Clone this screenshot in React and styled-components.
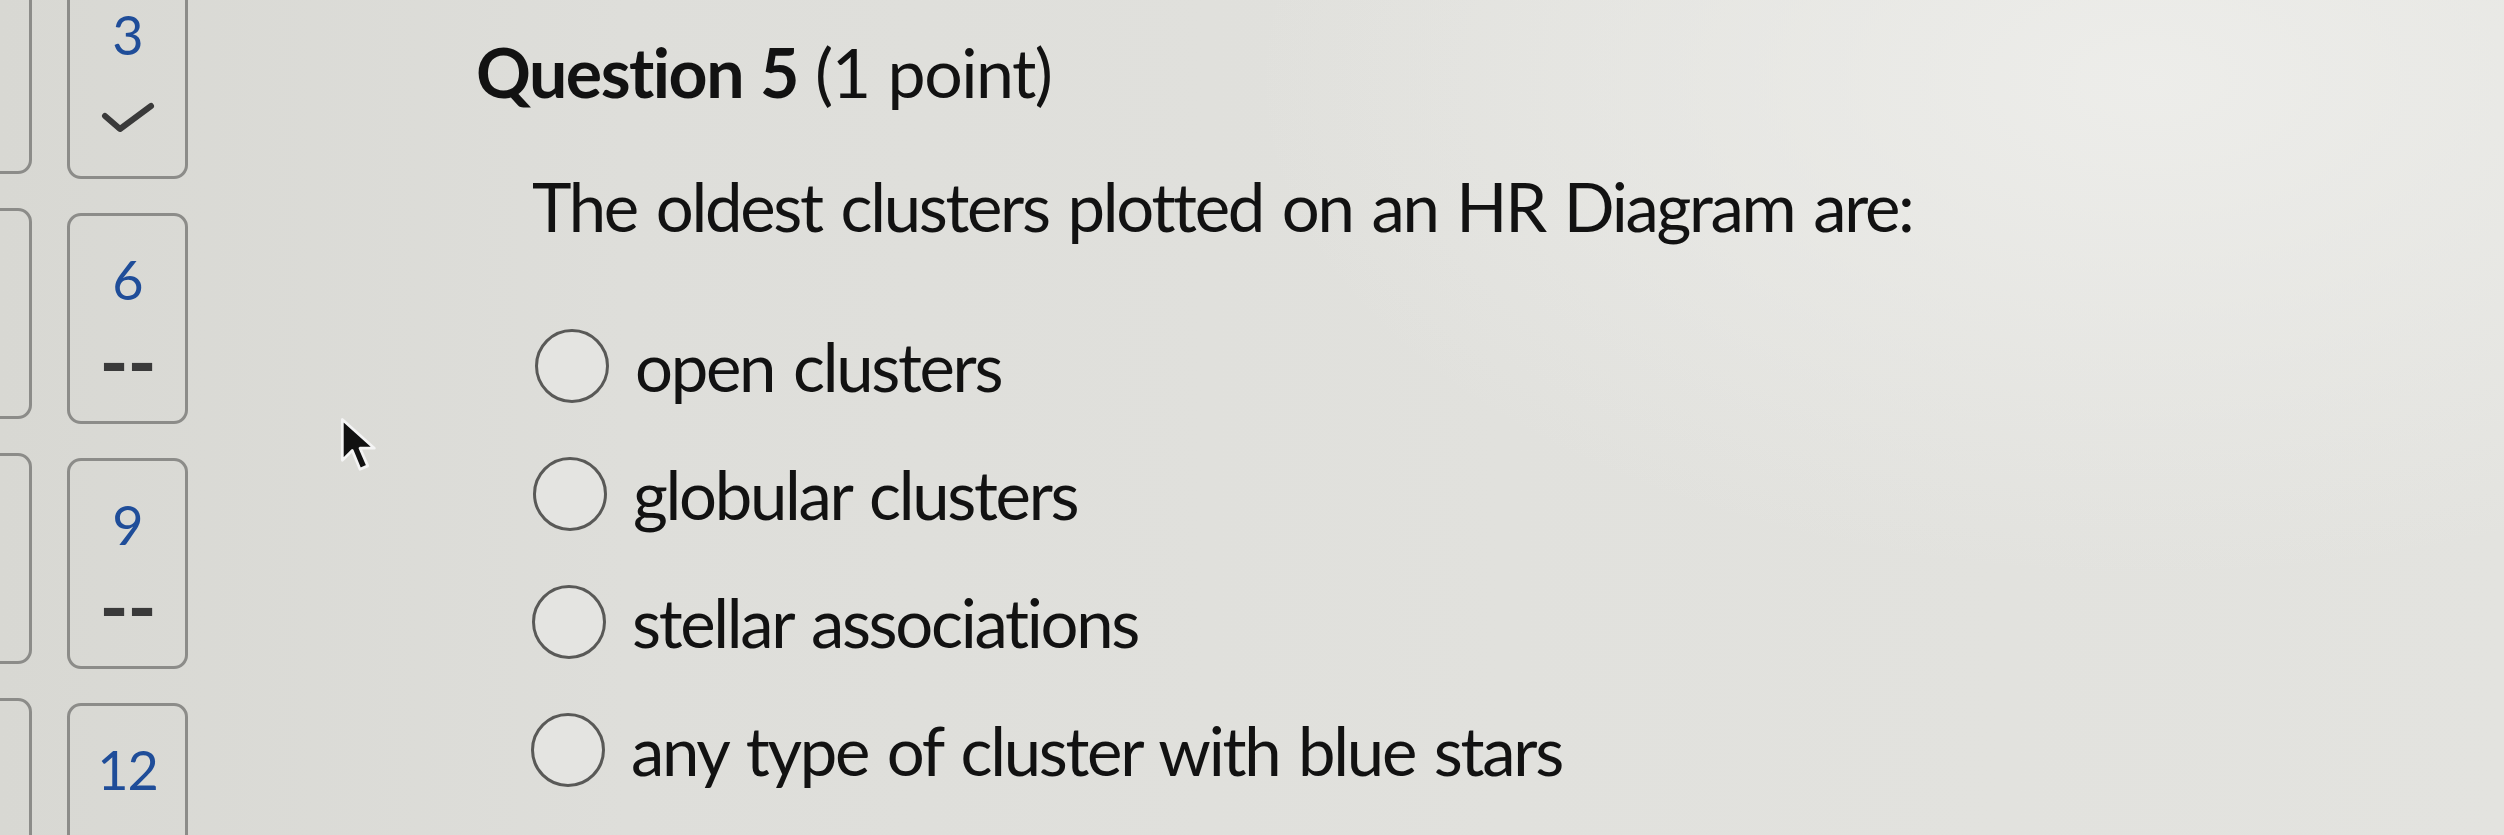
import React from "react";
import styled, { createGlobalStyle } from "styled-components";

const Global = createGlobalStyle`
  html, body { margin: 0; padding: 0; }
  body {
    width: 2504px;
    height: 835px;
    overflow: hidden;
    font-family: Lato, "Open Sans", "Liberation Sans", sans-serif;
    font-variant-ligatures: no-common-ligatures;
  }
`;

const Page = styled.div`
  position: relative;
  width: 2504px;
  height: 835px;
  overflow: hidden;
  display: flex;
  background:
    radial-gradient(ellipse 900px 500px at 2150px 80px, rgba(238,238,235,0.9), rgba(238,238,235,0) 100%),
    linear-gradient(90deg, #d8d8d3 0%, #dededa 25%, #e1e1dd 60%, #e3e3df 100%);
`;

const Sidebar = styled.nav`
  flex: none;
  display: grid;
  grid-template-columns: 121px 121px;
  grid-auto-rows: 211px;
  column-gap: 35px;
  row-gap: 34px;
  margin-left: -89px;
  margin-top: -32px;
  align-content: start;
`;

const Card = styled.div`
  box-sizing: border-box;
  border: 3px solid #8c8c89;
  border-radius: 14px;
  display: flex;
  flex-direction: column;
  align-items: center;
  padding-top: 36px;
  transform: translateY(${(p) => p.$shift || 0}px);
`;

const Num = styled.div`
  font-size: 54px;
  line-height: 56px;
  height: 56px;
  letter-spacing: -1px;
  color: #1f4d99;
  font-weight: 400;
`;

const Dashes = styled.div`
  margin-top: 14px;
  font-size: 78px;
  font-weight: 700;
  line-height: 1;
  color: #3a3a3a;
  letter-spacing: -1px;
`;

const Check = styled.svg`
  margin-top: 39px;
  width: 56px;
  height: 32px;
`;

const Main = styled.main`
  flex: 1;
  padding-left: 288px;
  padding-top: 31px;
  display: flex;
  flex-direction: column;
`;

const Heading = styled.h2`
  margin: 0;
  font-size: 68px;
  line-height: 1.2;
  letter-spacing: -1.5px;
  word-spacing: 2px;
  font-weight: 700;
  color: #121212;
  span { font-weight: 400; }
`;

const Prompt = styled.p`
  margin: 53px 0 0 56px;
  font-size: 67px;
  line-height: 1.2;
  letter-spacing: -2.3px;
  word-spacing: 4px;
  color: #121212;
`;

const Options = styled.div`
  margin: 80px 0 0 59px;
  display: flex;
  flex-direction: column;
  gap: 48px;
`;

const Option = styled.label`
  display: flex;
  align-items: center;
  gap: 26px;
  height: 80px;
  font-size: 67px;
  line-height: 1.2;
  letter-spacing: -2.3px;
  word-spacing: 4px;
  color: #121212;
  margin-left: ${(p) => p.$x || 0}px;
`;

const Radio = styled.span`
  flex: none;
  box-sizing: border-box;
  width: 74px;
  height: 74px;
  border-radius: 50%;
  border: 3px solid #595957;
  background: #e4e4e1;
`;

const Cursor = styled.svg`
  position: absolute;
  left: 339px;
  top: 416px;
  width: 42px;
  height: 60px;
`;

const cards = [
  { left: true },
  { num: "3", mark: "check" },
  { left: true },
  { num: "6", mark: "dash" },
  { left: true },
  { num: "9", mark: "dash" },
  { left: true },
  { num: "12", mark: null },
];

const options = [
  { t: "open clusters", x: 0 },
  { t: "globular clusters", x: -2 },
  { t: "stellar associations", x: -3 },
  { t: "any type of cluster with blue stars", x: -4 },
];

export default function App() {
  return (
    <>
      <Global />
      <Page>
        <Sidebar>
          {cards.map((c, i) =>
            c.left ? (
              <Card key={i} $shift={-5} />
            ) : (
              <Card key={i}>
                <Num>{c.num}</Num>
                {c.mark === "check" && (
                  <Check viewBox="0 0 56 32">
                    <polyline
                      points="5,14 20,27 51,4"
                      fill="none"
                      stroke="#3a3a3a"
                      strokeWidth="6"
                      strokeLinecap="round"
                      strokeLinejoin="round"
                    />
                  </Check>
                )}
                {c.mark === "dash" && <Dashes>--</Dashes>}
              </Card>
            )
          )}
        </Sidebar>
        <Main>
          <Heading>
            Question 5 <span>(1 point)</span>
          </Heading>
          <Prompt>The oldest clusters plotted on an HR Diagram are:</Prompt>
          <Options>
            {options.map((o) => (
              <Option key={o.t} $x={o.x}>
                <Radio />
                {o.t}
              </Option>
            ))}
          </Options>
        </Main>
        <Cursor viewBox="0 0 38 54">
          <path
            d="M3,3 L3,40 L12,31 L19,48 L26,45 L19,29 L32,29 Z"
            fill="#111"
            stroke="#f4f4f4"
            strokeWidth="2.5"
            strokeLinejoin="round"
          />
        </Cursor>
      </Page>
    </>
  );
}
